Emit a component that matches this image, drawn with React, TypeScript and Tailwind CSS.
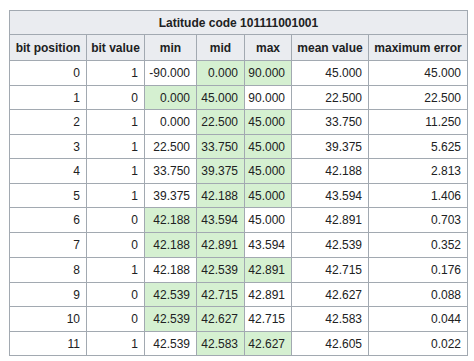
const ROWS: [number, number, string, string, string, string, string][] = [
  [0, 1, "-90.000", "0.000", "90.000", "45.000", "45.000"],
  [1, 0, "0.000", "45.000", "90.000", "22.500", "22.500"],
  [2, 1, "0.000", "22.500", "45.000", "33.750", "11.250"],
  [3, 1, "22.500", "33.750", "45.000", "39.375", "5.625"],
  [4, 1, "33.750", "39.375", "45.000", "42.188", "2.813"],
  [5, 1, "39.375", "42.188", "45.000", "43.594", "1.406"],
  [6, 0, "42.188", "43.594", "45.000", "42.891", "0.703"],
  [7, 0, "42.188", "42.891", "43.594", "42.539", "0.352"],
  [8, 1, "42.188", "42.539", "42.891", "42.715", "0.176"],
  [9, 0, "42.539", "42.715", "42.891", "42.627", "0.088"],
  [10, 0, "42.539", "42.627", "42.715", "42.583", "0.044"],
  [11, 1, "42.539", "42.583", "42.627", "42.605", "0.022"],
];

// row heights (incl. bottom border) to land on the reference's lines
const HEIGHTS = [25, 24, 25, 24, 25, 24, 25, 25, 25, 24, 25, 24];
const HEADERS = ["bit position", "bit value", "min", "mid", "max", "mean value", "maximum error"];

const cell = "border-r border-b border-[#a2a9b1] flex items-center";

export default function App() {
  return (
    <div className="w-[474px] h-[361px] bg-white pl-[9px] pt-[10px] text-[12px] leading-none text-[#202122] [font-family:'Liberation_Sans',Arial,sans-serif]">
      <div className="grid grid-cols-[77px_58px_52px_48px_47px_77px_99px] w-[459px] border-l border-t border-[#a2a9b1]">
        <div className={`${cell} col-span-7 h-[24px] justify-center bg-[#eaecf0] font-bold`}>
          Latitude code 101111001001
        </div>
        {HEADERS.map((h) => (
          <div key={h} className={`${cell} h-[26px] justify-center bg-[#eaecf0] font-bold`}>
            {h}
          </div>
        ))}
        {ROWS.map((r, i) => {
          const green = (on: boolean) => (on ? "bg-[#d5f0d1]" : "bg-white");
          const one = r[1] === 1;
          const vals = [
            { v: r[0], bg: "bg-white" },
            { v: r[1], bg: "bg-white" },
            { v: r[2], bg: green(!one) },
            { v: r[3], bg: green(true) },
            { v: r[4], bg: green(one) },
            { v: r[5], bg: "bg-white" },
            { v: r[6], bg: "bg-white" },
          ];
          return vals.map((c, j) => (
            <div
              key={`${i}-${j}`}
              className={`${cell} ${c.bg} justify-end pr-[6px]`}
              style={{ height: HEIGHTS[i] }}
            >
              {c.v}
            </div>
          ));
        })}
      </div>
    </div>
  );
}
